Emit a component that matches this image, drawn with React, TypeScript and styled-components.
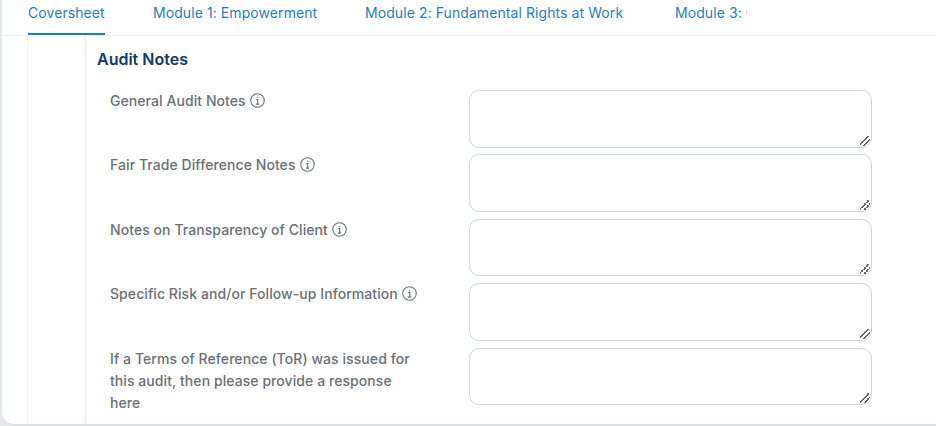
import React from "react";
import styled, { createGlobalStyle } from "styled-components";

const Global = createGlobalStyle`
  html, body { margin: 0; padding: 0; background: #fff; }
  #root { height: 426px; overflow: hidden; }
  * { box-sizing: border-box; }
`;

const Shell = styled.div`
  height: 426px;
  background: #e4e9f1;
  padding-left: 2px;
  padding-bottom: 1px;
  font-family: "Inter", "Noto Sans", sans-serif;
`;

const Panel = styled.div`
  height: 425px;
  background: #fff;
  border-bottom-left-radius: 12px;
  border-bottom: 1px solid #d6dae2;
  overflow: hidden;
  display: flex;
  flex-direction: column;
`;

const TabBar = styled.div`
  height: 36px;
  flex: none;
  border-bottom: 1px solid #eef0f3;
  padding-left: 26px;
`;

const TabList = styled.div`
  width: 719px;
  height: 35px;
  display: flex;
  gap: 48px;
  overflow: hidden;
`;

const Tab = styled.div<{ $active?: boolean; $width: number }>`
  flex: none;
  width: ${(p) => p.$width}px;
  height: 35px;
  padding-top: 3px;
  line-height: 20px;
  font-size: 14px;
  letter-spacing: 0.08px;
  white-space: nowrap;
  color: #1f7fc4;
  border-bottom: 2px solid ${(p) => (p.$active ? "#1f7fc4" : "transparent")};
`;

const Body = styled.div`
  flex: 1;
  min-height: 0;
  margin-left: 25px;
  display: flex;
  border-left: 1px solid #eceff3;
`;

const Gutter = styled.div`
  width: 57px;
  flex: none;
`;

const Section = styled.section`
  flex: 1;
  min-width: 0;
  border-left: 1px solid #eceff3;
  box-shadow: -2px 0 3px rgba(40, 50, 70, 0.04);
  padding: 13px 0 0 11px;
`;

const Heading = styled.h2`
  margin: 0 0 21px;
  font-size: 16px;
  line-height: 20px;
  font-weight: 600;
  color: #0f3a75;
`;

const Rows = styled.div`
  display: flex;
  flex-direction: column;
`;

const Row = styled.div<{ $pitch: number }>`
  display: flex;
  align-items: flex-start;
  height: ${(p) => p.$pitch}px;
  padding-left: 13px;
`;

const Label = styled.label`
  width: 359px;
  flex: none;
  padding: 0 48px 0 0;
  font-size: 14px;
  letter-spacing: 0.07px;
  line-height: 22px;
  font-weight: 500;
  color: #6b7077;
`;

const InfoIcon = styled.svg`
  width: 15px;
  height: 15px;
  margin-left: 4px;
  vertical-align: -2px;
`;

const Notes = styled.textarea<{ $height: number }>`
  display: block;
  width: 403px;
  height: ${(p) => p.$height}px;
  flex: none;
  margin: 0;
  border: 1px solid #ccd7de;
  border-radius: 10px;
  background: #fff;
  outline: none;
  resize: both;

  &::-webkit-resizer {
    background: linear-gradient(
        135deg,
        transparent 40%,
        #666 40%,
        #666 50%,
        transparent 50%,
        transparent 65%,
        #666 65%,
        #666 75%,
        transparent 75%
      )
      4px 4px / 10px 10px no-repeat;
  }
`;

function Info() {
  return (
    <InfoIcon viewBox="0 0 14 14" fill="none" stroke="#6b7077" strokeWidth="1">
      <circle cx="7" cy="7" r="6.3" />
      <path d="M5.8 6.2H7.2V10.2M5.6 10.4H8.6" />
      <circle cx="6.9" cy="4" r="0.6" fill="#6b7077" stroke="none" />
    </InfoIcon>
  );
}

const tabs = [
  { text: "Coversheet", width: 77 },
  { text: "Module 1: Empowerment", width: 164 },
  { text: "Module 2: Fundamental Rights at Work", width: 262 },
  { text: "Module 3: Collective Bargaining", width: 220 },
];

const fields: { text: string; info: boolean; pitch: number; height: number }[] = [
  { text: "General Audit Notes", info: true, pitch: 64, height: 58 },
  { text: "Fair Trade Difference Notes", info: true, pitch: 65, height: 58 },
  { text: "Notes on Transparency of Client", info: true, pitch: 64, height: 57 },
  { text: "Specific Risk and/or Follow-up Information", info: true, pitch: 65, height: 58 },
  { text: "If a Terms of Reference (ToR) was issued for this audit, then please provide a response here", info: false, pitch: 66, height: 57 },
];

export default function App() {
  return (
    <>
      <Global />
      <Shell>
        <Panel>
          <TabBar>
            <TabList>
              {tabs.map((t, i) => (
                <Tab key={t.text} $active={i === 0} $width={t.width}>{t.text}</Tab>
              ))}
            </TabList>
          </TabBar>
          <Body>
            <Gutter />
            <Section>
              <Heading>Audit Notes</Heading>
              <Rows>
                {fields.map((f) => (
                  <Row key={f.text} $pitch={f.pitch}>
                    <Label>
                      {f.text}
                      {f.info && <Info />}
                    </Label>
                    <Notes $height={f.height} />
                  </Row>
                ))}
              </Rows>
            </Section>
          </Body>
        </Panel>
      </Shell>
    </>
  );
}
